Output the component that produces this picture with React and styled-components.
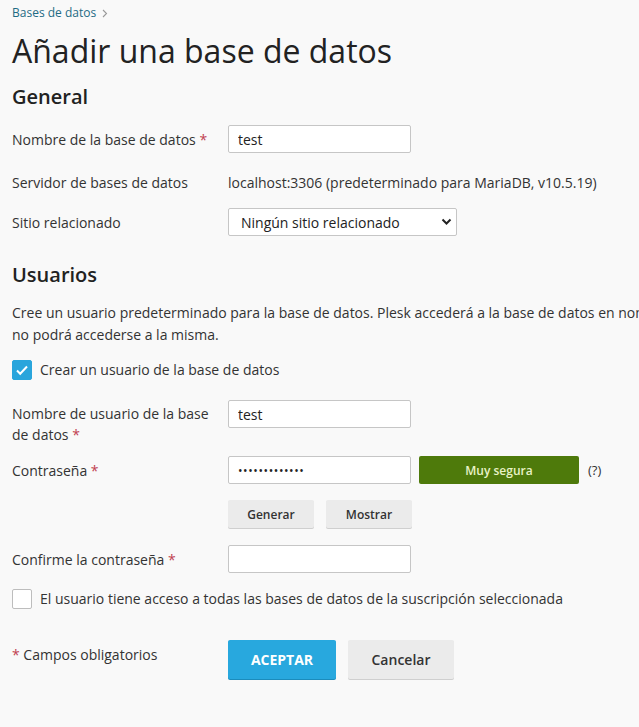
import React from "react";
import styled, { createGlobalStyle } from "styled-components";

const Global = createGlobalStyle`
  html, body { margin: 0; padding: 0; background: #f9f9f9; }
  body { font-family: "Open Sans", "Liberation Sans", sans-serif; color: #222; font-size: 14px; overflow-x: hidden; }
  * { box-sizing: border-box; }
`;

const Page = styled.div`
  padding: 4px 12px 40px;
  width: 639px;
  overflow: hidden;
`;

const Breadcrumb = styled.div`
  font-size: 12px;
  line-height: 18px;
  color: #1f6b84;
  display: flex;
  align-items: center;
  gap: 6px;
`;

const Title = styled.h1`
  margin: 8px 0 0;
  font-size: 32px;
  font-weight: 400;
  line-height: 42px;
  color: #222;
`;

const SectionTitle = styled.h2`
  margin: ${(p) => p.$top || 12}px 0 0;
  font-size: 20px;
  font-weight: 600;
  line-height: 28px;
  color: #222;
`;

const Form = styled.div`
  display: flex;
  flex-direction: column;
`;

const Row = styled.div`
  display: grid;
  grid-template-columns: 216px auto;
  align-items: ${(p) => (p.$top ? "start" : "center")};
  margin-top: ${(p) => p.$mt || 0}px;
  min-height: 28px;
`;

const Label = styled.div`
  line-height: 21px;
  color: #333;
  padding-right: 16px;
  padding-top: ${(p) => p.$pt || 0}px;
`;

const Req = styled.span`
  color: #c04050;
`;

const Value = styled.div`
  color: #333;
  line-height: 21px;
`;

const Input = styled.input`
  width: 183px;
  height: 28px;
  border: 1px solid #c6c6c6;
  border-radius: 2px;
  background: #fff;
  padding: 0 9px;
  font-family: inherit;
  font-size: 14px;
  color: #222;
  outline: none;
  &[type="password"] { letter-spacing: 0.6px; font-size: 12px; }
`;

const SelectBox = styled.div`
  width: 229px;
  height: 28px;
  border: 1px solid #c6c6c6;
  border-radius: 2px;
  background: #fff;
  display: flex;
  align-items: center;
  padding: 0 4px 0 12px;
  color: #222;
  justify-content: space-between;
`;

const Inline = styled.div`
  display: flex;
  align-items: center;
  gap: ${(p) => p.$gap || 8}px;
`;

const Strength = styled.div`
  width: 160px;
  height: 28px;
  background: #4e7a0b;
  border-radius: 2px;
  color: #e8f2c6;
  font-size: 12px;
  font-weight: 600;
  display: flex;
  align-items: center;
  justify-content: center;
`;

const Hint = styled.span`
  color: #333;
  font-size: 13px;
  margin-left: 1px;
`;

const SmallButton = styled.button`
  width: 86px;
  height: 28px;
  border: none;
  border-radius: 2px;
  background: #ebebeb;
  box-shadow: 0 1px 0 #cfcfcf;
  font-family: inherit;
  font-size: 12px;
  font-weight: 600;
  color: #333;
`;

const Para = styled.p`
  margin: 13px 0 0;
  line-height: 22px;
  color: #333;
  white-space: nowrap;
`;

const CheckRow = styled.label`
  display: flex;
  align-items: center;
  gap: 8px;
  margin-top: ${(p) => p.$mt || 0}px;
  color: #333;
  line-height: 21px;
`;

const Box = styled.span`
  width: 20px;
  height: 20px;
  border-radius: 2px;
  flex: none;
  display: flex;
  align-items: center;
  justify-content: center;
  background: ${(p) => (p.$checked ? "#29a5dc" : "#fff")};
  border: 1px solid ${(p) => (p.$checked ? "#29a5dc" : "#bdbdbd")};
`;

const Footer = styled.div`
  display: grid;
  grid-template-columns: 216px auto;
  margin-top: 31px;
  align-items: start;
`;

const FooterNote = styled.div`
  color: #333;
  line-height: 21px;
  padding-top: 4px;
`;

const Primary = styled.button`
  width: 108px;
  height: 39px;
  border: none;
  border-radius: 2px;
  background: #28a8de;
  color: #fff;
  font-family: inherit;
  font-size: 14px;
  font-weight: 700;
  box-shadow: 0 1px 0 #1b8cbc;
`;

const Secondary = styled.button`
  width: 106px;
  height: 39px;
  border: none;
  border-radius: 2px;
  background: #ebebeb;
  box-shadow: 0 1px 0 #cfcfcf;
  color: #333;
  font-family: inherit;
  font-size: 14px;
  font-weight: 600;
`;

export default function App() {
  return (
    <>
      <Global />
      <Page>
        <Breadcrumb>
          <span>Bases de datos</span>
          <svg width="6" height="9" viewBox="0 0 6 9"><path d="M1 1l3.5 3.5L1 8" fill="none" stroke="#999" strokeWidth="1.1" /></svg>
        </Breadcrumb>
        <Title>Añadir una base de datos</Title>

        <SectionTitle $top={11}>General</SectionTitle>
        <Form>
          <Row $mt={14}>
            <Label>Nombre de la base de datos <Req>*</Req></Label>
            <Input defaultValue="test" />
          </Row>
          <Row $mt={15}>
            <Label>Servidor de bases de datos</Label>
            <Value>localhost:3306 (predeterminado para MariaDB, v10.5.19)</Value>
          </Row>
          <Row $mt={12}>
            <Label>Sitio relacionado</Label>
            <SelectBox>
              <span>Ningún sitio relacionado</span>
              <svg width="11" height="8" viewBox="0 0 11 8"><path d="M1.5 1.5l4 4 4-4" fill="none" stroke="#222" strokeWidth="2" /></svg>
            </SelectBox>
          </Row>
        </Form>

        <SectionTitle $top={25}>Usuarios</SectionTitle>
        <Para>
          Cree un usuario predeterminado para la base de datos. Plesk accederá a la base de datos en nombre de este usuario. Si no crea ningún usuario,
          <br />
          no podrá accederse a la misma.
        </Para>
        <CheckRow $mt={13}>
          <Box $checked>
            <svg width="14" height="12" viewBox="0 0 14 12"><path d="M2 6.5l3.2 3.2L12 2.5" fill="none" stroke="#fff" strokeWidth="2" /></svg>
          </Box>
          Crear un usuario de la base de datos
        </CheckRow>
        <Form>
          <Row $mt={20} $top>
            <Label $pt={3}>Nombre de usuario de la base de datos <Req>*</Req></Label>
            <Input defaultValue="test" />
          </Row>
          <Row $mt={11}>
            <Label>Contraseña <Req>*</Req></Label>
            <Inline $gap={8}>
              <Input type="password" defaultValue="abcdefghijklm" />
              <Strength>Muy segura</Strength>
              <Hint>(?)</Hint>
            </Inline>
          </Row>
          <Row $mt={16}>
            <span />
            <Inline $gap={12}>
              <SmallButton>Generar</SmallButton>
              <SmallButton>Mostrar</SmallButton>
            </Inline>
          </Row>
          <Row $mt={17}>
            <Label>Confirme la contraseña <Req>*</Req></Label>
            <Input type="password" />
          </Row>
        </Form>
        <CheckRow $mt={15}>
          <Box />
          El usuario tiene acceso a todas las bases de datos de la suscripción seleccionada
        </CheckRow>
        <Footer>
          <FooterNote><Req>*</Req> Campos obligatorios</FooterNote>
          <Inline $gap={12}>
            <Primary>ACEPTAR</Primary>
            <Secondary>Cancelar</Secondary>
          </Inline>
        </Footer>
      </Page>
    </>
  );
}
